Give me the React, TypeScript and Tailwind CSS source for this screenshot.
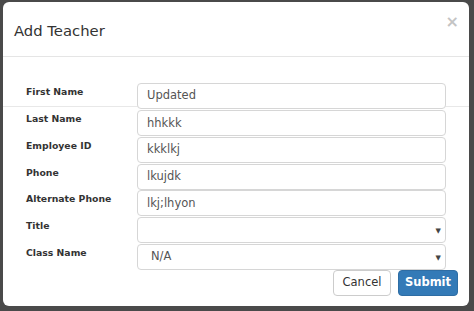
import React from "react";

const font = { fontFamily: '"DejaVu Sans", "Noto Sans", sans-serif' };

function Row({ label, value, select, first }: { label: string; value: string; select?: boolean; first?: boolean }) {
  return (
    <div className={"flex items-start " + (first ? "border-b border-[#e8e8e8] h-[24px]" : "h-[26px]")}>
      <div className="w-[134px] shrink-0 whitespace-nowrap pl-[23px] pt-[2px] text-[9.3px] font-bold text-[#333] leading-[14px]">{label}</div>
      <div
        className={
          "relative z-10 w-[309px] h-[26px] shrink-0 rounded-[4px] border border-[#d6d6d6] bg-white flex items-center text-[11.5px] text-[#555] " +
          (select ? "pl-[13px]" : "pl-[9px]")
        }
      >
        {value}
        {select && <span className="absolute right-[4px] top-[8px] text-[7px] text-[#444]">▼</span>}
      </div>
    </div>
  );
}

export default function App() {
  return (
    <div className="w-[474px] h-[311px] bg-[#4a4a4a] overflow-hidden pt-[2px] pl-[3px]" style={font}>
      <div className="w-[466px] h-[304px] bg-white rounded-[6px] flex flex-col">
        <div className="h-[55px] border-b border-[#e5e5e5] flex items-start justify-between pl-[11px] pr-[10px] shrink-0">
          <div className="pt-[19px] text-[14.8px] text-[#333] leading-[20px]">Add Teacher</div>
          <div className="pt-[10px] text-[16px] text-[#c4c4c4] font-bold leading-[20px]">×</div>
        </div>
        <div className="pt-[26px] flex flex-col gap-[0.7px]">
          <Row label="First Name" value="Updated" first />
          <div className="h-[2px]" />
          <Row label="Last Name" value="hhkkk" />
          <Row label="Employee ID" value="kkklkj" />
          <Row label="Phone" value="lkujdk" />
          <Row label="Alternate Phone" value="lkj;lhyon" />
          <Row label="Title" value="" select />
          <Row label="Class Name" value="N/A" select />
        </div>
        <div className="flex justify-end gap-[7px] pr-[11px]">
          <button className="w-[58px] h-[26px] rounded-[4px] border border-[#ccc] bg-white text-[11.5px] text-[#333]">Cancel</button>
          <button className="w-[60px] h-[26px] rounded-[4px] border border-[#2e6da4] bg-[#337ab7] text-[11.5px] font-bold text-white">Submit</button>
        </div>
      </div>
    </div>
  );
}
